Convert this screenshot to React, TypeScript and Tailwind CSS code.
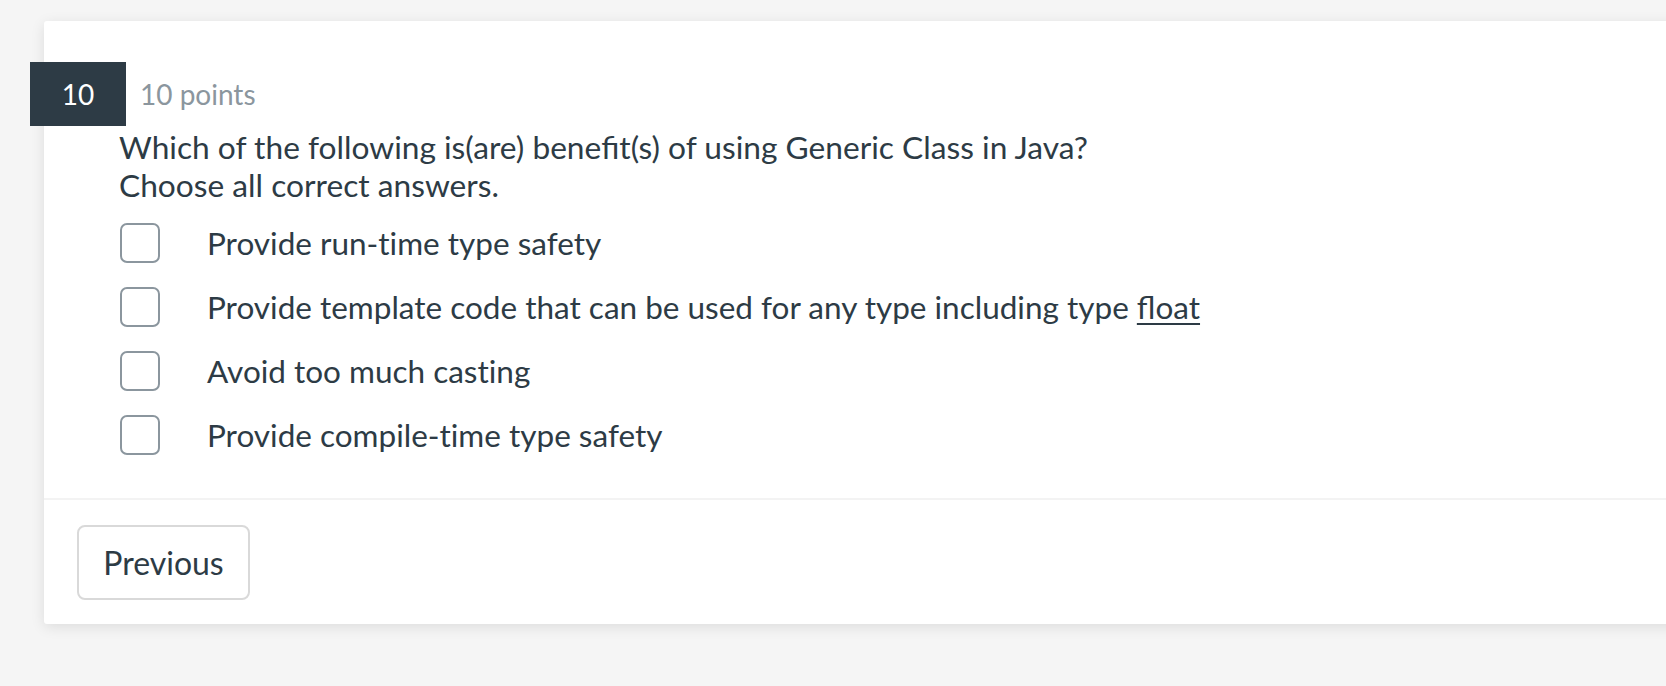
import React from "react";

const answers: React.ReactNode[] = [
  "Provide run-time type safety",
  <>
    Provide template code that can be used for any type including type{" "}
    <span className="underline decoration-[2px] underline-offset-[4px] [font-variant-ligatures:common-ligatures]">
      float
    </span>
  </>,
  "Avoid too much casting",
  "Provide compile-time type safety",
];

export default function App() {
  return (
    <div
      className="min-h-screen w-full overflow-hidden bg-[#f5f5f5] pl-[44px] pt-[21px] text-[#2d3b45]"
      style={{ fontFamily: "Lato, 'Open Sans', sans-serif" }}
    >
      <div className="w-[1660px] rounded-[3px] bg-white shadow-[0_3px_14px_rgba(0,0,0,0.10)]">
        <div className="pt-[41px]">
          <div className="flex items-center">
            <div className="ml-[-14px] flex h-[64px] w-[96px] items-center justify-center bg-[#2d3b45] text-[28px] leading-none text-white">
              10
            </div>
            <div className="ml-[14px] text-[28px] leading-none text-[#8b969e]">10 points</div>
          </div>
          <div className="ml-[75px] mt-[2px] text-[31.7px] leading-[38px]">
            <div>Which of the following is(are) benefit(s) of using Generic Class in Java?</div>
            <div>Choose all correct answers.</div>
          </div>
          <div className="ml-[76px] mt-[19px] flex flex-col gap-[24px] pb-[43px]">
            {answers.map((a, i) => (
              <label key={i} className="flex items-center">
                <span className="h-[40px] w-[40px] shrink-0 rounded-[7px] border-2 border-[#8b969e] bg-white" />
                <span className="ml-[47px] text-[31.5px] leading-[38px] [font-variant-ligatures:no-common-ligatures]">
                  {a}
                </span>
              </label>
            ))}
          </div>
        </div>
        <div className="h-[2px] bg-[#f3f3f3]" />
        <div className="px-[33px] pb-[24px] pt-[25px]">
          <button className="flex h-[75px] w-[173px] items-center justify-center rounded-[8px] border-2 border-[#d9d9d9] bg-white text-[32px] text-[#2d3b45]">
            Previous
          </button>
        </div>
      </div>
    </div>
  );
}
